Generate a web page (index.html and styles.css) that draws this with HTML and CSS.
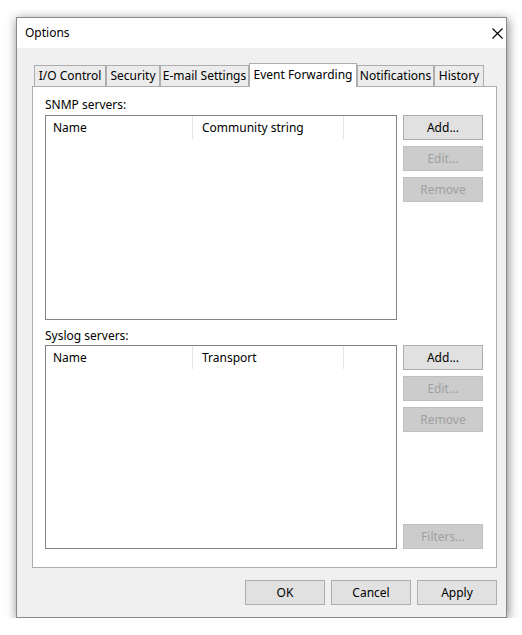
FILE: index.html
```html
<!DOCTYPE html>
<html>
<head>
<meta charset="utf-8">
<title>Options</title>
<link rel="stylesheet" href="styles.css">
</head>
<body>
<div class="window">
  <div class="titlebar">
    <span class="title">Options</span>
    <svg class="close" width="11" height="11" viewBox="0 0 11 11"><path d="M0.5 0.5 L10.5 10.5 M10.5 0.5 L0.5 10.5" stroke="#000" stroke-width="1.1" fill="none"/></svg>
  </div>
  <div class="body">
    <div class="tabs">
      <div class="tab t-io">I/O Control</div>
      <div class="tab t-sec">Security</div>
      <div class="tab t-mail">E-mail Settings</div>
      <div class="tab t-event selected">Event Forwarding</div>
      <div class="tab t-notif">Notifications</div>
      <div class="tab t-hist">History</div>
    </div>
    <div class="panel">
      <div class="label">SNMP servers:</div>
      <div class="row">
        <div class="list">
          <div class="header">
            <div class="col c1">Name</div>
            <div class="col c2">Community string</div>
            <div class="col c3"></div>
          </div>
        </div>
        <div class="buttons">
          <div class="btn">Add...</div>
          <div class="btn disabled">Edit...</div>
          <div class="btn disabled">Remove</div>
        </div>
      </div>
      <div class="label second">Syslog servers:</div>
      <div class="row">
        <div class="list list2">
          <div class="header">
            <div class="col c1">Name</div>
            <div class="col c2">Transport</div>
            <div class="col c3"></div>
          </div>
        </div>
        <div class="buttons">
          <div class="btn">Add...</div>
          <div class="btn disabled">Edit...</div>
          <div class="btn disabled">Remove</div>
          <div class="spacer"></div>
          <div class="btn disabled">Filters...</div>
        </div>
      </div>
    </div>
    <div class="footer">
      <div class="btn">OK</div>
      <div class="btn">Cancel</div>
      <div class="btn">Apply</div>
    </div>
  </div>
</div>
</body>
</html>
```

FILE: styles.css
```css
html, body {
  margin: 0;
  padding: 0;
  background: #ffffff;
}
body {
  font-family: "Noto Sans", "Open Sans", sans-serif;
  font-size: 12px;
  color: #000;
}
.window {
  margin: 17px 0 0 16px;
  width: 491px;
  height: 601px;
  box-sizing: border-box;
  border: 1px solid #8a8a8a;
  background: #f0f0f0;
  box-shadow: 1px 2px 10px rgba(0, 0, 0, 0.5);
  display: flex;
  flex-direction: column;
  overflow: hidden;
}
.titlebar {
  height: 30px;
  flex: none;
  background: #ffffff;
  display: flex;
  align-items: center;
  justify-content: space-between;
  padding: 0 3px 0 8px;
}
.title {
  line-height: 16px;
}
.close {
  display: block;
}
.body {
  flex: 1;
  display: flex;
  flex-direction: column;
  padding: 15px 9px 12px 15px;
  min-width: 0;
}
.tabs {
  height: 23px;
  display: flex;
  align-items: flex-end;
  padding-left: 2px;
  flex: none;
}
.tab {
  height: 21px;
  box-sizing: border-box;
  border: 1px solid #adadad;
  border-bottom: none;
  background: #ececec;
  text-align: center;
  line-height: 19px;
  white-space: nowrap;
  flex: none;
}
.t-io { width: 72px; }
.t-sec { width: 54px; }
.t-mail { width: 89px; }
.t-event { width: 108px; }
.t-notif { width: 77px; }
.t-hist { width: 50px; }
.tab.selected {
  height: 24px;
  margin-bottom: -1px;
  background: #ffffff;
  line-height: 21px;
  position: relative;
  z-index: 1;
}
.panel {
  flex: 1;
  border: 1px solid #adadad;
  background: #ffffff;
  padding: 10px 12px 0 12px;
}
.label {
  line-height: 15px;
  height: 15px;
  margin-bottom: 3px;
}
.label.second {
  margin-top: 8px;
  margin-bottom: 2px;
}
.row {
  display: flex;
  gap: 6px;
}
.list {
  width: 352px;
  height: 205px;
  box-sizing: border-box;
  border: 1px solid #828282;
  background: #ffffff;
}
.list2 {
  height: 204px;
}
.header {
  display: flex;
  height: 23px;
}
.col {
  box-sizing: border-box;
  padding-left: 7px;
  line-height: 23px;
  border-right: 1px solid #e5e5e5;
  white-space: nowrap;
}
.c1 { width: 147px; }
.c2 { width: 151px; padding-left: 9px; }
.c3 { border-right: none; }
.buttons {
  display: flex;
  flex-direction: column;
  gap: 6px;
}
.spacer {
  flex: 1;
}
.btn {
  width: 80px;
  height: 25px;
  box-sizing: border-box;
  border: 1px solid #adadad;
  background: #e1e1e1;
  text-align: center;
  line-height: 23px;
}
.btn.disabled {
  background: #cccccc;
  border-color: #bfbfbf;
  color: #a0a0a0;
}
.footer {
  flex: none;
  display: flex;
  justify-content: flex-end;
  gap: 6px;
  margin-top: 12px;
}
```
